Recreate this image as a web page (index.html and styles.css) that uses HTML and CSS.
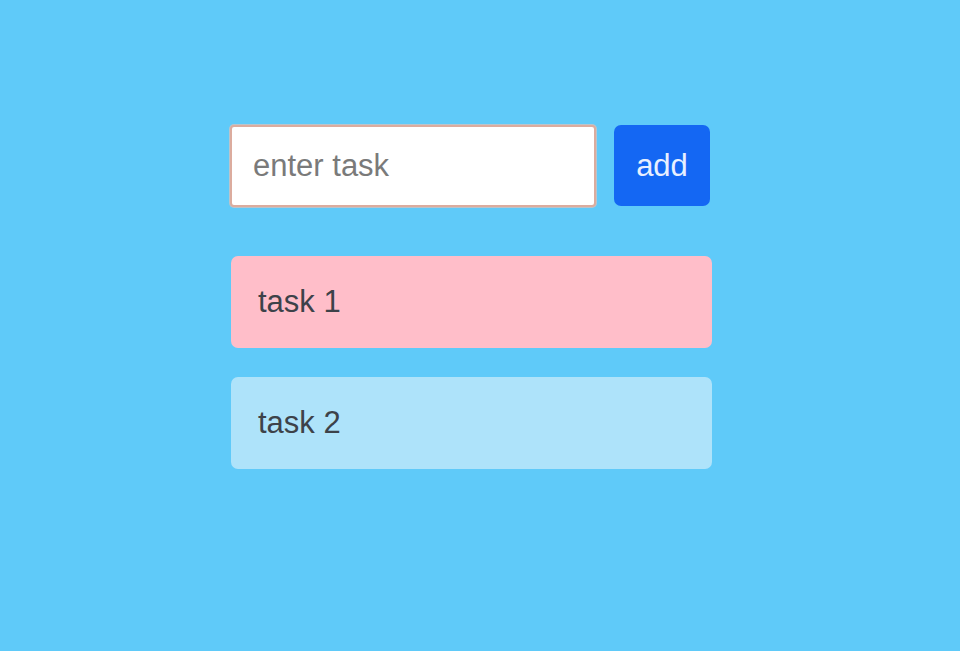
FILE: index.html
```html
<!DOCTYPE html>
<html lang="en">
<head>
    <meta charset="UTF-8">
    <meta name="viewport" content="width=device-width, initial-scale=1.0">
    <title>Todo</title>
    <link rel="stylesheet" href="styles.css">
</head>
<body>
    <div class="wrapper">
        <form class="taskForm">
            <input class="taskInput" type="text" placeholder="enter task">
            <button class="btnAdd" type="button">add</button>
        </form>
        <ul class="taskList">
            <li class="task pink">task 1</li>
            <li class="task blue">task 2</li>
        </ul>
    </div>
</body>
</html>
```

FILE: styles.css
```css
*{padding:0;margin:0;list-style:none;box-sizing:border-box;}
html,body{height:100%;}
body{background:#5fcaf9;font-family:"Liberation Sans",Arial,sans-serif;color:#3d4249;}
.wrapper{width:482px;margin-left:230px;padding-top:125px;}
.taskForm{display:flex;gap:18px;width:480px;}
.taskInput{width:366px;height:82px;border:2px solid #dcac9e;border-radius:4px;background:#fff;padding:0 21px;
font-family:"Liberation Sans",Arial,sans-serif;font-size:31px;color:#333;outline:none;box-shadow:0 0 0 1px #b9c4cc;}
.taskInput::placeholder{color:#7a7a7a;}
.btnAdd{width:96px;height:81px;border:none;border-radius:7px;background:#1467f3;color:#e8f0ff;
font-family:"Liberation Sans",Arial,sans-serif;font-size:31px;cursor:pointer;}
.taskList{margin-top:49px;padding-left:1px;display:flex;flex-direction:column;gap:29px;}
.task{height:92px;border-radius:7px;padding:0 27px;display:flex;align-items:center;font-size:31px;}
.task.pink{background:#ffbec9;}
.task.blue{background:#aee3fa;}
```
